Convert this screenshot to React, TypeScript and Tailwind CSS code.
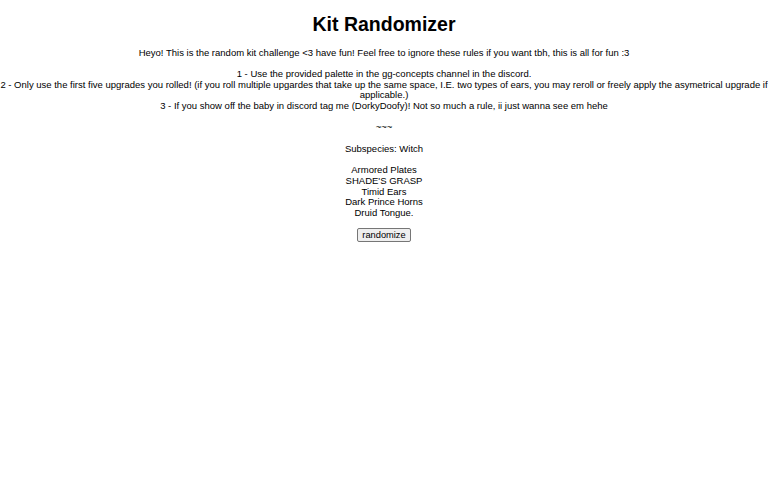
import { useState } from "react";

// Upgrade pools for each roll
const SUBSPECIES = ["Witch", "Forest", "Desert", "Swamp", "Alpine"];

const UPGRADES = [
  "Armored Plates",
  "SHADE'S GRASP",
  "Timid Ears",
  "Dark Prince Horns",
  "Druid Tongue.",
];

const RULES = [
  "1 - Use the provided palette in the gg-concepts channel in the discord.",
  "2 - Only use the first five upgrades you rolled! (if you roll multiple upgardes that take up the same space, I.E. two types of ears, you may reroll or freely apply the asymetrical upgrade if applicable.)",
  "3 - If you show off the baby in discord tag me (DorkyDoofy)! Not so much a rule, ii just wanna see em hehe",
];

function Gap() {
  return <div className="h-[10.7px]" />;
}

export default function App() {
  const [subspecies, setSubspecies] = useState(SUBSPECIES[0]);
  const [upgrades, setUpgrades] = useState(UPGRADES);

  const randomize = () => {
    setSubspecies(SUBSPECIES[Math.floor(Math.random() * SUBSPECIES.length)]);
    setUpgrades([...UPGRADES].sort(() => Math.random() - 0.5));
  };

  return (
    <div className="min-h-[480px] bg-white text-black text-center font-['Liberation_Sans',Arial,sans-serif] pt-[13px]">
      <h1 className="text-[19.5px] leading-[22px] font-bold">Kit Randomizer</h1>

      <div className="mt-[12.5px] text-[9.5px] leading-[10.7px]">
        <div>
          Heyo! This is the random kit challenge &lt;3 have fun! Feel free to ignore these rules if you want tbh, this is
          all for fun :3
        </div>
        <Gap />
        {RULES.map(rule => (
          <div key={rule}>{rule}</div>
        ))}
        <Gap />
        <div>~~~</div>
        <Gap />
        <div>Subspecies: {subspecies}</div>
        <Gap />
        {upgrades.map(u => (
          <div key={u}>{u}</div>
        ))}

        <button
          onClick={randomize}
          className="mt-[9.5px] h-[14px] px-[4px] leading-[12px] text-[9.3px] bg-[#efefef] border border-[#767676] rounded-[2px]"
        >
          randomize
        </button>
      </div>
    </div>
  );
}
